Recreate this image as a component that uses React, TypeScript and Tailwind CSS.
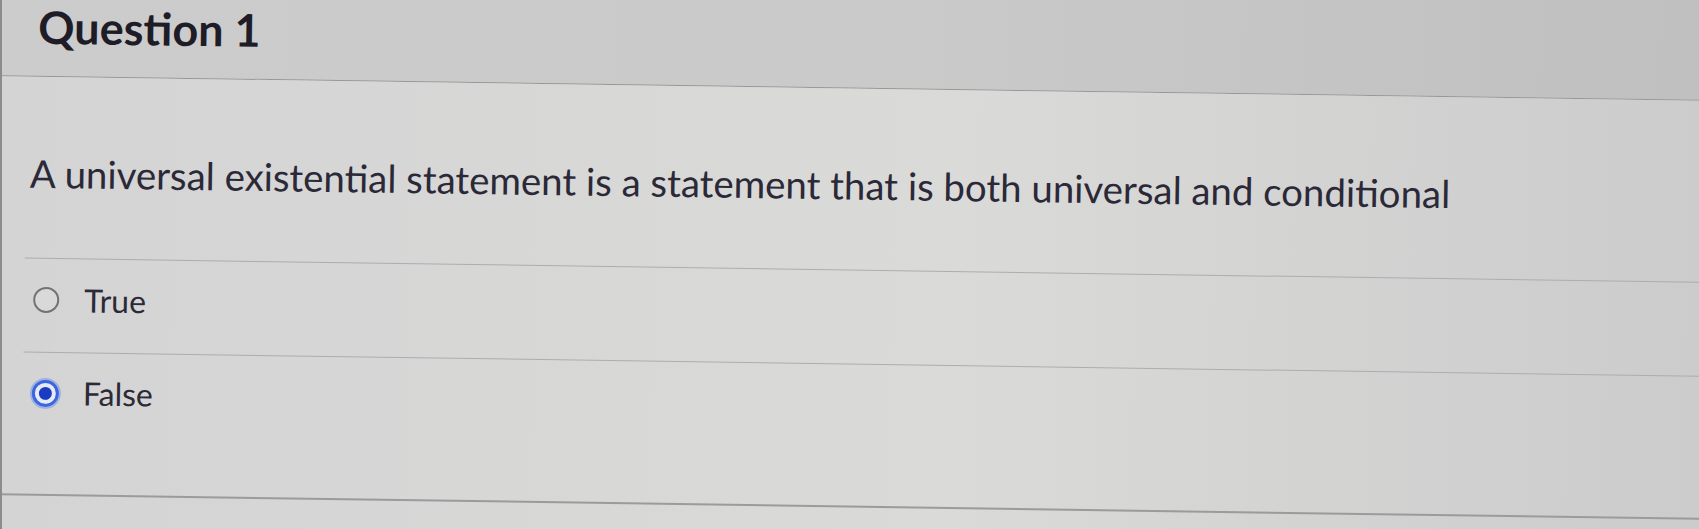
import React from "react";

const font = "font-['Lato','Noto_Sans',sans-serif]";

function RadioRow({
  label,
  checked,
  top,
}: {
  label: string;
  checked?: boolean;
  top: string;
}) {
  return (
    <div className={`ml-[29px] h-[94px] border-t border-[#adadad] ${top}`}>
      <div className="flex h-[32px] items-center">
        <div className="flex w-[60px] justify-start pl-[9px]">
          {checked ? (
            <span className="flex h-[27px] w-[27px] items-center justify-center rounded-full border-[3px] border-[#3b66df] bg-[#e6eaf4] shadow-[0_0_0_2px_rgba(95,135,235,0.45)]">
              <span className="h-[13px] w-[13px] rounded-full bg-[#1a3bc2]" />
            </span>
          ) : (
            <span className="h-[26px] w-[26px] rounded-full border-[2.5px] border-[#737373] bg-[#d9d9d9]" />
          )}
        </div>
        <span className="text-[32px] leading-none text-[#2c2a36]">{label}</span>
      </div>
    </div>
  );
}

export default function App() {
  return (
    <div
      className={`${font} relative h-[529px] w-full overflow-hidden bg-[#c6c6c6]`}
    >
      <div className="-mt-[30px] -ml-[12px] w-[1760px] origin-top-left rotate-[0.83deg] pl-[12px]">
        {/* header strip */}
        <div className="h-[106px] border-b border-[#979797] bg-linear-to-r from-[#cccccc] via-[#cacaca] to-[#bfbfbf] pt-[34px] pl-[39px]">
          <h1 className="text-[45px] font-bold leading-none text-[#1e1d27]">
            Question 1
          </h1>
        </div>

        {/* question body */}
        <div className="h-[560px] bg-linear-to-r from-[#d4d4d4] via-[#dadad9] via-55% to-[#cbcbcb]">
          <p className="pt-[77px] pl-[33px] text-[38.4px] leading-none text-[#2b2937]">
            A universal existential statement is a statement that is both
            universal and conditional
          </p>
          <div className="mt-[66px]">
            <RadioRow label="True" top="pt-[25px]" />
            <div className="h-[142px]">
              <RadioRow label="False" checked top="pt-[24px]" />
            </div>
          </div>
          <div className="border-t-2 border-[#9b9b9b]" />
        </div>
      </div>
      <div className="pointer-events-none absolute inset-y-0 left-0 w-[2px] bg-[#8c8c8c]" />
    </div>
  );
}
